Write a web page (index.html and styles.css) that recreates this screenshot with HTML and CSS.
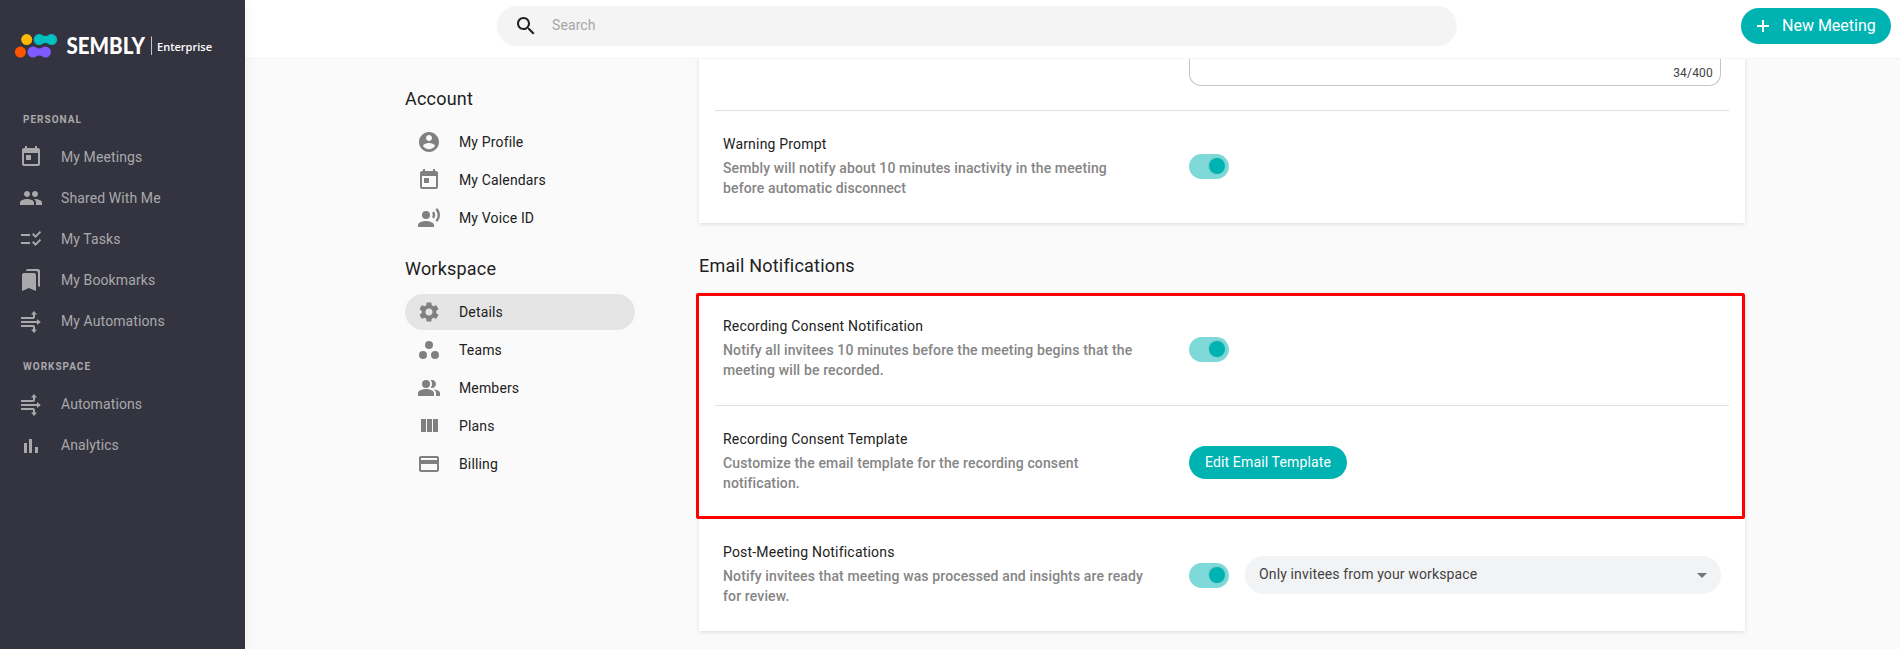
FILE: index.html
```
<!DOCTYPE html>
<html lang="en">

<head>
    <meta charset="UTF-8">
    <meta name="viewport" content="width=device-width, initial-scale=1.0">
    <title>Sembly - Workspace Details</title>
    <link rel="stylesheet" href="styles.css">
</head>

<body>
    <aside class="sidebar">
        <svg class="logo" width="245" height="94" viewBox="0 0 245 94">
            <circle cx="26.7" cy="39.6" r="5.5" fill="#ffb900" />
            <path fill="#00bfc0" d="M39.2 34.1c2.6 0 3.6 2 6.2 2s3.6-2 6.2-2a5.5 5.5 0 0 1 0 11c-2.6 0-3.6-2-6.2-2s-3.6 2-6.2 2a5.5 5.5 0 0 1 0-11z" />
            <circle cx="20.4" cy="52.1" r="5.5" fill="#ff5500" />
            <path fill="#7f5bff" d="M33 46.6c2.6 0 3.6 2 6.2 2s3.6-2 6.2-2a5.5 5.5 0 0 1 0 11c-2.6 0-3.6-2-6.2-2s-3.6 2-6.2 2a5.5 5.5 0 0 1 0-11z" />
            <text class="logo-name" x="66.5" y="53.5" textLength="78.5" lengthAdjust="spacingAndGlyphs">SEMBLY</text>
            <path d="M151.5 36.5v18.5" stroke="#c4c4c8" stroke-width="1" />
            <text class="logo-plan" x="157" y="51" textLength="55" lengthAdjust="spacingAndGlyphs">Enterprise</text>
        </svg>

        <h3 class="side-title">PERSONAL</h3>
        <nav class="side-nav">
            <a class="side-link">
                <svg class="icon" viewBox="0 0 24 24"><path d="M19 3h-1V1h-2v2H8V1H6v2H5c-1.11 0-1.99.9-1.99 2L3 19c0 1.1.89 2 2 2h14c1.1 0 2-.9 2-2V5c0-1.1-.9-2-2-2zm0 16H5V8h14v11zM7 10h5v5H7z" /></svg>
                My Meetings
            </a>
            <a class="side-link">
                <svg class="icon" viewBox="0 0 24 24"><path d="M16 11c1.66 0 2.99-1.34 2.99-3S17.66 5 16 5s-3 1.34-3 3 1.34 3 3 3zm-8 0c1.66 0 2.99-1.34 2.99-3S9.66 5 8 5 5 6.34 5 8s1.34 3 3 3zm0 2c-2.33 0-7 1.17-7 3.5V19h14v-2.5c0-2.33-4.67-3.5-7-3.5zm8 0c-.29 0-.62.02-.97.05 1.16.84 1.97 1.97 1.97 3.45V19h6v-2.5c0-2.33-4.67-3.5-7-3.5z" /></svg>
                Shared With Me
            </a>
            <a class="side-link">
                <svg class="icon" viewBox="0 0 24 24"><path d="M16.54 11L13 7.46l1.41-1.41 2.12 2.12 4.24-4.24 1.41 1.41L16.54 11zM11 7H2v2h9V7zM16.54 19L13 15.46l1.41-1.41 2.12 2.12 4.24-4.24 1.41 1.41L16.54 19zM11 15H2v2h9v-2z" /></svg>
                My Tasks
            </a>
            <a class="side-link">
                <svg class="icon" viewBox="0 0 24 24"><path d="M19 18l2 1V3c0-1.1-.9-2-2-2H8.99C7.89 1 7 1.9 7 3h10c1.1 0 2 .9 2 2v13zM15 5H5c-1.1 0-2 .9-2 2v16l7-3 7 3V7c0-1.1-.9-2-2-2z" /></svg>
                My Bookmarks
            </a>
            <a class="side-link">
                <svg class="icon" viewBox="0 0 24 24"><path d="M15 2l3 3.6h-2V8a2 2 0 0 1-2 2H2V8h12V5.6h-2zM2 12h16v-2l3.8 3-3.8 3v-2H2zM2 16h12a2 2 0 0 1 2 2v2.4h2L15 24l-3-3.6h2V18H2z" /></svg>
                My Automations
            </a>
        </nav>

        <h3 class="side-title">WORKSPACE</h3>
        <nav class="side-nav">
            <a class="side-link">
                <svg class="icon" viewBox="0 0 24 24"><path d="M15 2l3 3.6h-2V8a2 2 0 0 1-2 2H2V8h12V5.6h-2zM2 12h16v-2l3.8 3-3.8 3v-2H2zM2 16h12a2 2 0 0 1 2 2v2.4h2L15 24l-3-3.6h2V18H2z" /></svg>
                Automations
            </a>
            <a class="side-link">
                <svg class="icon" viewBox="0 0 24 24"><path d="M5 10h3v10H5zM10 6h3v14h-3zM16 14h3v6h-3z" /></svg>
                Analytics
            </a>
        </nav>
    </aside>

    <div class="page">
        <header class="topbar">
            <div class="search">
                <svg class="icon" viewBox="0 0 24 24"><path d="M15.5 14h-.79l-.28-.27C15.41 12.59 16 11.11 16 9.5 16 5.91 13.09 3 9.5 3S3 5.91 3 9.5 5.91 16 9.5 16c1.61 0 3.09-.59 4.23-1.57l.27.28v.79l5 4.99L20.49 19l-4.99-5zm-6 0C7.01 14 5 11.99 5 9.5S7.01 5 9.5 5 14 7.01 14 9.5 11.99 14 9.5 14z" /></svg>
                <input type="text" placeholder="Search">
            </div>
            <button class="btn btn-new">
                <svg class="plus" viewBox="0 0 12 12"><path d="M5 0h2v5h5v2H7v5H5V7H0V5h5z" /></svg>
                New Meeting
            </button>
        </header>

        <main class="content">
            <div class="settings-menu">
                <h2>Account</h2>
                <nav class="menu">
                    <a class="menu-item">
                        <svg class="icon" viewBox="0 0 24 24"><path d="M12 2C6.48 2 2 6.48 2 12s4.48 10 10 10 10-4.48 10-10S17.52 2 12 2zm0 3c1.66 0 3 1.34 3 3s-1.34 3-3 3-3-1.34-3-3 1.34-3 3-3zm0 14.2c-2.5 0-4.71-1.28-6-3.22.03-1.99 4-3.08 6-3.08 1.99 0 5.97 1.09 6 3.08-1.29 1.94-3.5 3.22-6 3.22z" /></svg>
                        My Profile
                    </a>
                    <a class="menu-item">
                        <svg class="icon" viewBox="0 0 24 24"><path d="M19 3h-1V1h-2v2H8V1H6v2H5c-1.11 0-1.99.9-1.99 2L3 19c0 1.1.89 2 2 2h14c1.1 0 2-.9 2-2V5c0-1.1-.9-2-2-2zm0 16H5V8h14v11zM7 10h5v5H7z" /></svg>
                        My Calendars
                    </a>
                    <a class="menu-item">
                        <svg class="icon" viewBox="0 0 24 24"><circle cx="9" cy="9" r="4" /><path d="M9 15c-2.67 0-8 1.34-8 4v2h16v-2c0-2.66-5.33-4-8-4zm7.76-9.64l-1.68 1.69c.84 1.18.84 2.71 0 3.89l1.68 1.69c2.02-2.02 2.02-5.07 0-7.27zM20.07 2l-1.63 1.63c2.77 3.02 2.77 7.56 0 10.74L20.07 16c3.9-3.89 3.91-9.95 0-14z" /></svg>
                        My Voice ID
                    </a>
                </nav>

                <h2>Workspace</h2>
                <nav class="menu">
                    <a class="menu-item active">
                        <svg class="icon" viewBox="0 0 24 24"><path d="M19.14 12.94c.04-.3.06-.61.06-.94 0-.32-.02-.64-.07-.94l2.03-1.58c.18-.14.23-.41.12-.61l-1.92-3.32c-.12-.22-.37-.29-.59-.22l-2.39.96c-.5-.38-1.03-.7-1.62-.94l-.36-2.54c-.04-.24-.24-.41-.48-.41h-3.84c-.24 0-.43.17-.47.41l-.36 2.54c-.59.24-1.13.57-1.62.94l-2.39-.96c-.22-.08-.47 0-.59.22L2.74 8.87c-.12.21-.08.47.12.61l2.03 1.58c-.05.3-.09.63-.09.94s.02.64.07.94l-2.03 1.58c-.18.14-.23.41-.12.61l1.92 3.32c.12.22.37.29.59.22l2.39-.96c.5.38 1.03.7 1.62.94l.36 2.54c.05.24.24.41.48.41h3.84c.24 0 .44-.17.47-.41l.36-2.54c.59-.24 1.13-.56 1.62-.94l2.39.96c.22.08.47 0 .59-.22l1.92-3.32c.12-.22.07-.47-.12-.61l-2.01-1.58zM12 15.6c-1.98 0-3.6-1.62-3.6-3.6s1.62-3.6 3.6-3.6 3.6 1.62 3.6 3.6-1.62 3.6-3.6 3.6z" /></svg>
                        Details
                    </a>
                    <a class="menu-item">
                        <svg class="icon" viewBox="0 0 24 24"><circle cx="12" cy="7" r="4" /><circle cx="6" cy="17" r="4" /><circle cx="18" cy="17" r="4" /></svg>
                        Teams
                    </a>
                    <a class="menu-item">
                        <svg class="icon" viewBox="0 0 24 24"><circle cx="9" cy="8" r="4" /><path d="M16.67 13.13C18.04 14.06 19 15.32 19 17v3h4v-3c0-2.18-3.57-3.47-6.33-3.87zM15 12c2.21 0 4-1.79 4-4s-1.79-4-4-4c-.47 0-.91.1-1.33.24C14.5 5.27 15 6.58 15 8s-.5 2.73-1.33 3.76c.42.14.86.24 1.33.24zM9 13c-2.67 0-8 1.34-8 4v3h16v-3c0-2.66-5.33-4-8-4z" /></svg>
                        Members
                    </a>
                    <a class="menu-item">
                        <svg class="icon" viewBox="0 0 24 24"><path d="M10 18h5V5h-5v13zm-6 0h5V5H4v13zM16 5v13h5V5h-5z" /></svg>
                        Plans
                    </a>
                    <a class="menu-item">
                        <svg class="icon" viewBox="0 0 24 24"><path d="M20 4H4c-1.11 0-1.99.89-1.99 2L2 18c0 1.11.89 2 2 2h16c1.11 0 2-.89 2-2V6c0-1.11-.89-2-2-2zm0 14H4v-6h16v6zm0-10H4V6h16v2z" /></svg>
                        Billing
                    </a>
                </nav>
            </div>

            <div class="settings">
                <section class="card">
                    <div class="message-box">34/400</div>
                    <hr>
                    <div class="row">
                        <div class="row-text">
                            <h4>Warning Prompt</h4>
                            <p>Sembly will notify about 10 minutes inactivity in the meeting before automatic disconnect</p>
                        </div>
                        <div class="toggle"></div>
                    </div>
                </section>

                <h2 class="section-title">Email Notifications</h2>
                <section class="card">
                    <div class="highlight">
                        <div class="row">
                            <div class="row-text">
                                <h4>Recording Consent Notification</h4>
                                <p>Notify all invitees 10 minutes before the meeting begins that the meeting will be recorded.</p>
                            </div>
                            <div class="toggle"></div>
                        </div>
                        <hr>
                        <div class="row">
                            <div class="row-text">
                                <h4>Recording Consent Template</h4>
                                <p>Customize the email template for the recording consent notification.</p>
                            </div>
                            <button class="btn btn-edit">Edit Email Template</button>
                        </div>
                        <hr>
                    </div>
                    <div class="row">
                        <div class="row-text">
                            <h4>Post-Meeting Notifications</h4>
                            <p>Notify invitees that meeting was processed and insights are ready for review.</p>
                        </div>
                        <div class="toggle"></div>
                        <div class="select">
                            Only invitees from your workspace
                            <span class="arrow"></span>
                        </div>
                    </div>
                </section>
            </div>
        </main>
    </div>
</body>

</html>
```
FILE: styles.css
```
* {
    box-sizing: border-box;
}

body {
    display: flex;
    height: 100vh;
    margin: 0;
    overflow: hidden;
    font-family: Roboto, sans-serif;
    font-size: 14px;
    color: #212121;
    background-color: #fafafa;
}

h2, h3, h4, p {
    margin: 0;
}

.icon {
    width: 24px;
    height: 24px;
    flex-shrink: 0;
    fill: currentColor;
}

/* Sidebar */
.sidebar {
    position: relative;
    z-index: 2;
    width: 245px;
    flex-shrink: 0;
    background-color: #343440;
    color: #a9a9ab;
    box-shadow: 0 0 14px rgba(0, 0, 0, 0.06);
}

.logo {
    display: block;
    fill: #fff;
}

.logo-name {
    font-family: Lato, sans-serif;
    font-size: 22px;
    font-weight: 900;
}

.logo-plan {
    font-family: "Open Sans", sans-serif;
    font-size: 11.5px;
    font-weight: 600;
}

.side-title {
    height: 42px;
    padding: 19px 0 0 23px;
    font-size: 10px;
    line-height: 14px;
    font-weight: 700;
    letter-spacing: 1px;
}

.side-link {
    display: flex;
    align-items: center;
    gap: 18px;
    height: 41px;
    padding-left: 19px;
    letter-spacing: 0.1px;
}

/* Top bar */
.page {
    flex: 1;
    display: flex;
    flex-direction: column;
}

.topbar {
    display: flex;
    justify-content: space-between;
    height: 59px;
    flex-shrink: 0;
    padding: 6px 9px 0 252px;
    background-color: #fff;
    border-bottom: 1px solid #f3f3f3;
}

.search {
    display: flex;
    align-items: center;
    gap: 14px;
    width: 960px;
    height: 40px;
    padding-left: 17px;
    border-radius: 20px;
    background-color: #f4f4f4;
}

.search input {
    flex: 1;
    padding: 0 0 2px;
    border: none;
    outline: none;
    background: none;
    font: inherit;
    letter-spacing: 0.1px;
}

.search input::placeholder {
    color: #a6a6a6;
}

.btn {
    border: none;
    border-radius: 18px;
    background-color: #00b3b3;
    color: #fff;
    font-family: inherit;
    cursor: pointer;
}

.btn-new {
    display: flex;
    align-items: center;
    gap: 13px;
    width: 150px;
    height: 36px;
    margin-top: 2px;
    padding: 0 0 1px 16px;
    font-size: 16px;
    white-space: nowrap;
}

.plus {
    width: 12px;
    height: 12px;
    margin-top: 1px;
    fill: #fff;
}

.btn-edit {
    width: 158px;
    height: 33px;
    padding: 0;
    font-size: 14px;
    letter-spacing: 0.15px;
}

/* Settings menu */
.content {
    flex: 1;
    display: flex;
    padding-left: 160px;
    overflow: hidden;
}

.settings-menu {
    width: 230px;
    margin-right: 64px;
    padding-top: 28px;
}

h2 {
    font-size: 18px;
    line-height: 24px;
    font-weight: 400;
    letter-spacing: 0.2px;
}

.menu {
    display: flex;
    flex-direction: column;
    gap: 2px;
    margin: 13px 0 21px;
}

.menu-item {
    display: flex;
    align-items: center;
    gap: 18px;
    height: 36px;
    padding-left: 12px;
    border-radius: 18px;
    letter-spacing: 0.15px;
}

.menu-item .icon {
    color: #808080;
}

.menu-item.active {
    background-color: #e5e5e5;
}

/* Settings cards */
.settings {
    width: 1046px;
}

.card {
    background-color: #fff;
    box-shadow: 0 1px 4px rgba(0, 0, 0, 0.12);
}

.card hr {
    height: 1px;
    margin: 0 16px;
    border: none;
    background-color: #e0e0e0;
}

.message-box {
    width: 532px;
    height: 27px;
    margin: 0 24px 24px auto;
    padding: 5px 7px 0 0;
    border: 1px solid #c4c4c4;
    border-top: none;
    border-radius: 0 0 12px 12px;
    font-size: 12px;
    line-height: 18px;
    letter-spacing: 0.2px;
    text-align: right;
    color: #424242;
}

.row {
    display: flex;
    align-items: center;
    height: 112px;
    padding: 0 24px;
}

.row-text {
    width: 466px;
    margin-top: -2px;
    padding-right: 40px;
}

.row-text h4 {
    margin-bottom: 4px;
    font-size: 14px;
    line-height: 20px;
    font-weight: 400;
    letter-spacing: 0.19px;
}

.row-text p {
    line-height: 20px;
    font-weight: 500;
    letter-spacing: 0.13px;
    color: #858585;
}

.section-title {
    padding: 31px 0 15px;
}

.toggle {
    width: 40px;
    height: 25px;
    padding: 4px;
    border-radius: 13px;
    background-color: #80d9d9;
}

.card:first-child .toggle {
    margin-bottom: 1px;
}

.toggle::before {
    content: "";
    display: block;
    width: 16px;
    height: 16px;
    margin-left: auto;
    border-radius: 50%;
    background-color: #00b3b3;
    box-shadow: 0 0 3px rgba(0, 0, 0, 0.12);
}

.select {
    flex: 1;
    display: flex;
    align-items: center;
    justify-content: space-between;
    height: 38px;
    margin-left: 16px;
    padding: 0 14px 2px;
    border-radius: 19px;
    background-color: #f2f3f5;
    color: #424242;
    letter-spacing: 0.14px;
}

.arrow {
    margin-top: 2px;
    border: 5px solid transparent;
    border-top-color: #757575;
    border-bottom: none;
}

.highlight {
    position: relative;
}

.highlight::after {
    content: "";
    position: absolute;
    inset: 0 0 0 -3px;
    border: 3px solid #ff0000;
    border-radius: 2px;
}
```
